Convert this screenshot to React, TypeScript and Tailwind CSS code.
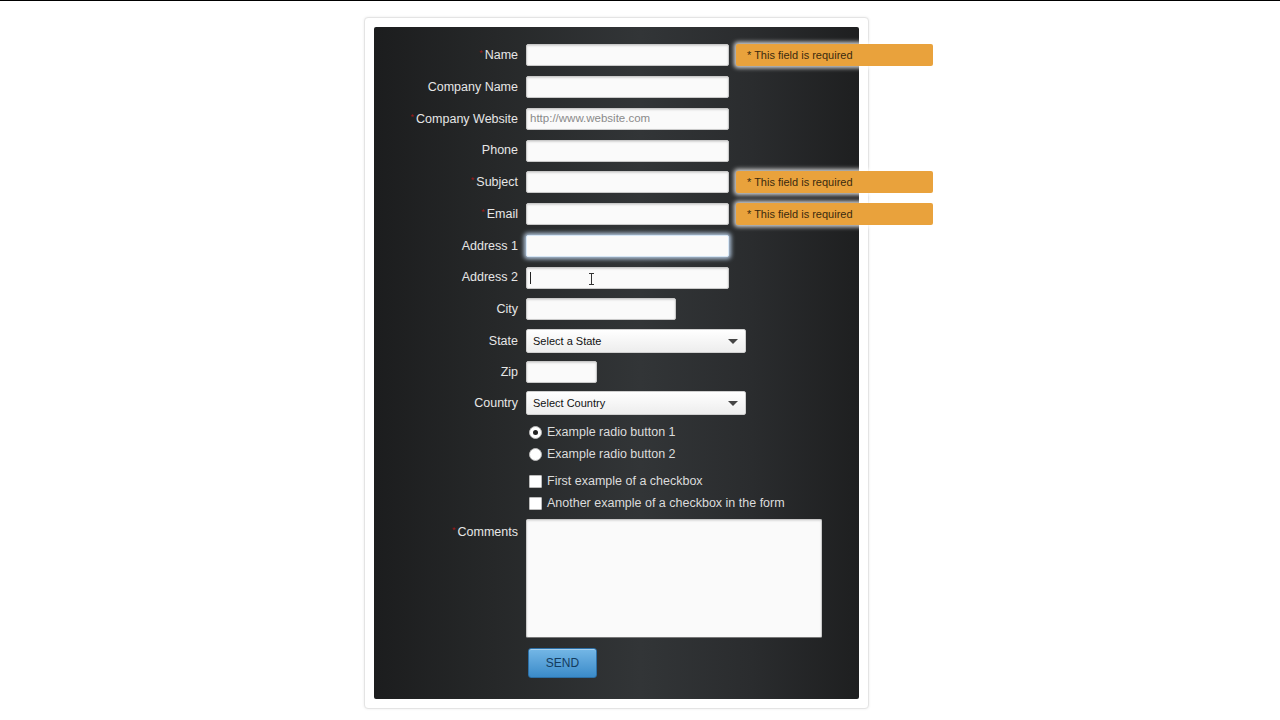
import React from 'react'

const font = { fontFamily: '"Liberation Sans", Arial, sans-serif' }

type RowProps = {
  label: string
  required?: boolean
  rowClass?: string
  labelClass?: string
  children: React.ReactNode
}

function Row({ label, required, rowClass = 'h-[31.75px] items-center', labelClass = '', children }: RowProps) {
  return (
    <div className={`flex ${rowClass}`}>
      <div className={`w-[152px] shrink-0 pr-[8px] text-right text-[12.5px] text-[#e6e6e6] ${labelClass}`}>
        {required && <span className="relative -top-[3px] mr-[2px] text-[9px] text-[#9a1b1b]">*</span>}
        {label}
      </div>
      <div className="relative flex items-center">{children}</div>
    </div>
  )
}

function ErrorTip() {
  return (
    <div className="absolute left-[210px] top-1/2 -translate-y-1/2 flex h-[22px] w-[197px] items-center rounded-[2px] bg-[#e9a23c] pl-[11px] text-[11px] text-[#3b2a0e] shadow-[0_0_4px_2px_rgba(255,255,255,0.8)]">
      * This field is required
    </div>
  )
}

function TextInput({ width = 'w-[203px]', focus, caret, placeholder }: { width?: string; focus?: boolean; caret?: boolean; placeholder?: string }) {
  return (
    <div
      className={`relative flex h-[22px] ${width} items-center rounded-[2px] border bg-[#fafafa] pl-[3px] ${
        focus
          ? 'border-[#d6e6f5] shadow-[0_0_4px_2px_rgba(205,228,255,0.85)]'
          : 'border-[#c9c9c9] shadow-[inset_0_1px_2px_rgba(0,0,0,0.15)]'
      }`}
    >
      {placeholder && <span className="text-[11.5px] text-[#8a8a8a]">{placeholder}</span>}
      {caret && (
        <>
          <span className="h-[12px] w-px bg-[#222]" />
          <span className="absolute left-[62px] top-[5px] flex h-[12px] w-[5px] flex-col items-center">
            <span className="h-px w-[5px] bg-[#333]" />
            <span className="w-px flex-1 bg-[#333]" />
            <span className="h-px w-[5px] bg-[#333]" />
          </span>
        </>
      )}
    </div>
  )
}

function Select({ text }: { text: string }) {
  return (
    <div className="flex h-[24px] w-[220px] items-center justify-between rounded-[2px] border border-[#cfcfcf] bg-gradient-to-b from-white to-[#ededed] pl-[6px] pr-[7px] text-[11px] text-[#111]">
      <span>{text}</span>
      <span className="h-0 w-0 border-x-[5px] border-t-[5px] border-x-transparent border-t-[#444]" />
    </div>
  )
}

function Dot({ checked }: { checked?: boolean }) {
  return (
    <span className="flex h-[13px] w-[13px] items-center justify-center rounded-full border border-[#bbb] bg-white">
      {checked && <span className="h-[5px] w-[5px] rounded-full bg-[#222]" />}
    </span>
  )
}

function Box() {
  return <span className="h-[13px] w-[13px] rounded-[1px] border border-[#bbb] bg-white" />
}

export default function App() {
  return (
    <div style={font} className="min-h-[720px] border-t border-black bg-white">
      <div className="ml-[364px] mt-[16px] w-[505px] rounded-[4px] border border-[#e4e4e4] bg-white p-[9px] shadow-[0_0_3px_rgba(0,0,0,0.08)]">
        <div className="h-[672px] rounded-[2px] bg-[linear-gradient(to_right,#1c1d1e_0%,#262829_25%,#323537_55%,#2a2c2e_78%,#1e1f20_100%)] pt-[12.5px]">
          <Row label="Name" required>
            <TextInput />
            <ErrorTip />
          </Row>
          <Row label="Company Name">
            <TextInput />
          </Row>
          <Row label="Company Website" required>
            <TextInput placeholder="http://www.website.com" />
          </Row>
          <Row label="Phone">
            <TextInput />
          </Row>
          <Row label="Subject" required>
            <TextInput />
            <ErrorTip />
          </Row>
          <Row label="Email" required>
            <TextInput />
            <ErrorTip />
          </Row>
          <Row label="Address 1">
            <TextInput focus />
          </Row>
          <Row label="Address 2">
            <TextInput caret />
          </Row>
          <Row label="City">
            <TextInput width="w-[150px]" />
          </Row>
          <Row label="State">
            <Select text="Select a State" />
          </Row>
          <Row label="Zip" rowClass="h-[30px] items-center">
            <TextInput width="w-[71px]" />
          </Row>
          <Row label="Country" rowClass="h-[32px] items-center">
            <Select text="Select Country" />
          </Row>

          <div className="ml-[152px] mt-[3px] flex flex-col text-[12.5px] text-[#dcdcdc]">
            <label className="flex h-[21.5px] items-center gap-[5px] pl-[3px]">
              <Dot checked />
              Example radio button 1
            </label>
            <label className="flex h-[21.5px] items-center gap-[5px] pl-[3px]">
              <Dot />
              Example radio button 2
            </label>
            <label className="mt-[6px] flex h-[21.5px] items-center gap-[5px] pl-[3px]">
              <Box />
              First example of a checkbox
            </label>
            <label className="flex h-[21.5px] items-center gap-[5px] pl-[3px]">
              <Box />
              Another example of a checkbox in the form
            </label>
          </div>

          <div className="mt-[5px]">
            <Row label="Comments" required rowClass="items-start" labelClass="pt-[4px]">
              <div className="h-[119px] w-[296px] rounded-[2px] border border-[#c9c9c9] border-b-[#777] bg-[#fafafa] shadow-[inset_0_1px_2px_rgba(0,0,0,0.12)]" />
            </Row>
          </div>

          <div className="ml-[154px] mt-[10px]">
            <button className="flex h-[30px] w-[69px] items-center justify-center rounded-[3px] border border-[#2c6fa6] bg-gradient-to-b from-[#74b7e6] to-[#3a8bc9] text-[12px] text-[#143b5e] shadow-[inset_0_1px_0_rgba(255,255,255,0.35)]">
              SEND
            </button>
          </div>
        </div>
      </div>
    </div>
  )
}
